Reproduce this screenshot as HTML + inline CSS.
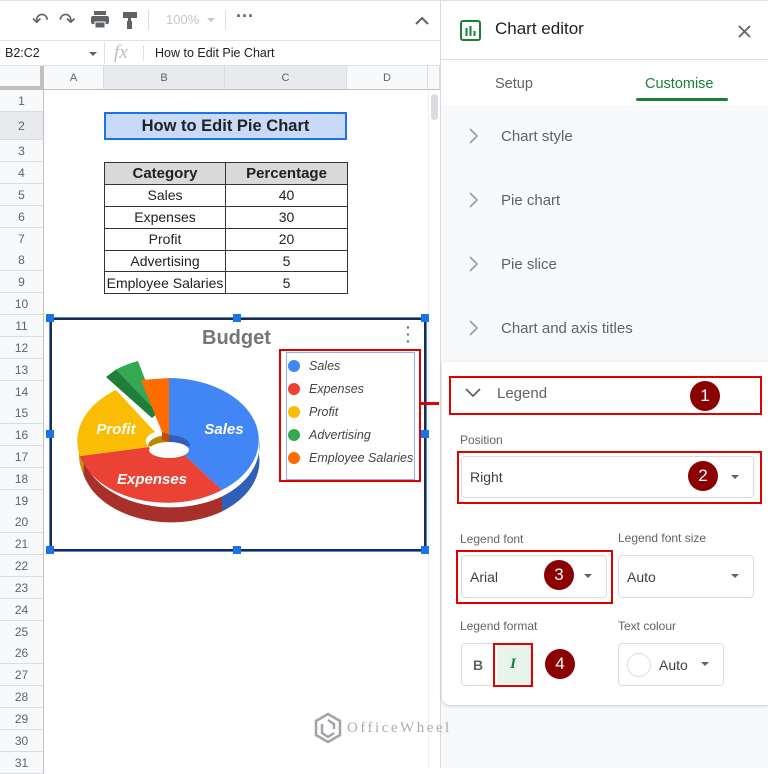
<!DOCTYPE html>
<html><head><meta charset="utf-8"><style>
*{box-sizing:border-box;margin:0;padding:0}
body{width:768px;height:768px;overflow:hidden;background:#fff;font-family:"Liberation Sans",Arial,sans-serif;position:relative;color:#202124}
.a{position:absolute}
.rh{position:absolute;left:0;width:44px;background:#f8f9fa;border-bottom:1px solid #dadce0;border-right:1px solid #c0c0c0;color:#5f6368;font-size:12px;text-align:center;display:flex;align-items:center;justify-content:center}
.ch{position:absolute;top:66px;height:24px;background:#f8f9fa;border-right:1px solid #dadce0;border-bottom:1px solid #c0c0c0;color:#5f6368;font-size:11px;display:flex;align-items:center;justify-content:center}
table{border-collapse:collapse;position:absolute;left:104px;top:162px}
td{border:1px solid #333;font-size:14px;text-align:center;height:21.9px;padding:0}
.item{position:absolute;left:442px;width:326px;height:64px;display:flex;align-items:center;font-size:15px;color:#5f6368}
.item svg{margin:0 23px 0 27px}
.lbl{position:absolute;font-size:12px;color:#5f6368}
.inp{position:absolute;border:1px solid #dadce0;border-radius:4px;background:#fff;font-size:14px;color:#3c4043;display:flex;align-items:center;padding-left:8px}
.tri{position:absolute;width:0;height:0;border-left:4px solid transparent;border-right:4px solid transparent;border-top:4px solid #5f6368}
.num{position:absolute;width:30px;height:30px;border-radius:50%;background:#8b0000;color:#fff;font-size:17px;display:flex;align-items:center;justify-content:center}
.red{position:absolute;border:2.5px solid #e00000}
.h{position:absolute;width:8px;height:8px;background:#1a73e8}
</style></head><body>
<div class="a" style="left:0;top:0;width:440px;height:40px;background:#fff;border-top:1px solid #e0e0e0"></div>
<div class="a" style="left:32px;top:8px;font-size:20px;color:#5f6368;letter-spacing:10px">↶↷</div>
<svg class="a" style="left:90px;top:11px" width="20" height="18" viewBox="0 0 20 18"><rect x="4" y="0" width="12" height="4" fill="#5f6368"/><rect x="1" y="5" width="18" height="8" rx="2" fill="#5f6368"/><rect x="5" y="11" width="10" height="6" fill="#5f6368" stroke="#fff" stroke-width="1"/></svg>
<svg class="a" style="left:122px;top:12px" width="16" height="18" viewBox="0 0 16 18"><rect x="1" y="0" width="14" height="6" fill="#5f6368"/><rect x="6" y="6" width="3" height="3" fill="#5f6368"/><rect x="5" y="9" width="5" height="8" fill="#5f6368"/></svg>
<div class="a" style="left:148px;top:10px;width:1px;height:20px;background:#dadce0"></div>
<div class="a" style="left:166px;top:12px;font-size:13px;color:#c6c6c6">100%</div>
<div class="tri" style="left:207px;top:18px;border-top-color:#c6c6c6"></div>
<div class="a" style="left:225px;top:10px;width:1px;height:20px;background:#dadce0"></div>
<div class="a" style="left:236px;top:6px;font-size:18px;color:#5f6368;font-weight:bold">···</div>
<svg class="a" style="left:415px;top:16px" width="14" height="9"><path d="M1,8 L7,2 L13,8" fill="none" stroke="#5f6368" stroke-width="2"/></svg>
<div class="a" style="left:0;top:40px;width:440px;height:26px;border-top:1px solid #e0e0e0;border-bottom:1px solid #e0e0e0"></div>
<div class="a" style="left:5px;top:46px;font-size:12.5px">B2:C2</div>
<div class="tri" style="left:89px;top:52px"></div>
<div class="a" style="left:104px;top:42px;width:1px;height:22px;background:#e0e0e0"></div>
<div class="a" style="left:114px;top:42px;font-size:19px;color:#bdbdbd;font-style:italic;font-family:'Liberation Serif',serif">fx</div>
<div class="a" style="left:143px;top:45px;width:1px;height:16px;background:#e0e0e0"></div>
<div class="a" style="left:155px;top:46px;font-size:12.5px">How to Edit Pie Chart</div>
<div class="a" style="left:0;top:66px;width:44px;height:24px;background:#f8f9fa;border-right:4px solid #c0c0c0;border-bottom:4px solid #c0c0c0"></div>
<div class="ch" style="left:44px;width:60px">A</div>
<div class="ch" style="left:104px;width:121px;background:#e8eaed">B</div>
<div class="ch" style="left:225px;width:122px;background:#e8eaed">C</div>
<div class="ch" style="left:347px;width:81px">D</div>
<div class="ch" style="left:428px;width:12px"></div>
<div class="a" style="left:428px;top:90px;width:12px;height:678px;background:#fff;border-left:1px solid #eee"></div>
<div class="a" style="left:431px;top:94px;width:7px;height:26px;border-radius:4px;background:#dadce0"></div>
<div class="rh" style="top:90px;height:22px">1</div>
<div class="rh" style="top:112px;height:28px;background:#e8eaed">2</div>
<div class="rh" style="top:140px;height:22px">3</div>
<div class="rh" style="top:162px;height:22px">4</div>
<div class="rh" style="top:184px;height:22px">5</div>
<div class="rh" style="top:206px;height:22px">6</div>
<div class="rh" style="top:228px;height:22px">7</div>
<div class="rh" style="top:249px;height:22px">8</div>
<div class="rh" style="top:271px;height:22px">9</div>
<div class="rh" style="top:293px;height:22px">10</div>
<div class="rh" style="top:315px;height:22px">11</div>
<div class="rh" style="top:337px;height:22px">12</div>
<div class="rh" style="top:359px;height:22px">13</div>
<div class="rh" style="top:381px;height:22px">14</div>
<div class="rh" style="top:402px;height:22px">15</div>
<div class="rh" style="top:424px;height:22px">16</div>
<div class="rh" style="top:446px;height:22px">17</div>
<div class="rh" style="top:468px;height:22px">18</div>
<div class="rh" style="top:490px;height:22px">19</div>
<div class="rh" style="top:511px;height:22px">20</div>
<div class="rh" style="top:533px;height:22px">21</div>
<div class="rh" style="top:555px;height:22px">22</div>
<div class="rh" style="top:577px;height:22px">23</div>
<div class="rh" style="top:599px;height:22px">24</div>
<div class="rh" style="top:621px;height:22px">25</div>
<div class="rh" style="top:642px;height:22px">26</div>
<div class="rh" style="top:664px;height:22px">27</div>
<div class="rh" style="top:686px;height:22px">28</div>
<div class="rh" style="top:708px;height:22px">29</div>
<div class="rh" style="top:730px;height:22px">30</div>
<div class="rh" style="top:752px;height:22px">31</div>
<div class="a" style="left:104px;top:112px;width:243px;height:28px;background:#c9daf8;border:2px solid #1a73e8;font-weight:bold;font-size:16.5px;text-align:center;line-height:24px">How to Edit Pie Chart</div>
<table>
<tr><td style="width:121px;background:#d9d9d9;font-weight:bold;font-size:15px">Category</td><td style="width:122px;background:#d9d9d9;font-weight:bold;font-size:15px">Percentage</td></tr>
<tr><td>Sales</td><td>40</td></tr>
<tr><td>Expenses</td><td>30</td></tr>
<tr><td>Profit</td><td>20</td></tr>
<tr><td>Advertising</td><td>5</td></tr>
<tr><td>Employee Salaries</td><td>5</td></tr>
</table>
<div class="a" style="left:50px;top:318px;width:376px;height:233px;border:2px solid #1f2a44;box-shadow:0 0 0 1px #4a86e8"></div>
<div class="h" style="left:46px;top:314px"></div><div class="h" style="left:233px;top:314px"></div><div class="h" style="left:421px;top:314px"></div>
<div class="h" style="left:46px;top:430px"></div><div class="h" style="left:421px;top:430px"></div>
<div class="h" style="left:46px;top:546px"></div><div class="h" style="left:233px;top:546px"></div><div class="h" style="left:421px;top:546px"></div>
<div class="a" style="left:202px;top:327px;font-size:20px;font-weight:bold;color:#757575">Budget</div>
<div class="a" style="left:406px;top:324px;font-size:14px;color:#666;line-height:7px;font-weight:bold">·<br>·<br>·</div>
<svg class="a" style="left:0;top:0" width="440" height="560">
<path d="M259,440 A90,62 0 0 1 222,496.5 L222,511.5 A90,62 0 0 0 259,455 Z" fill="#2f5fb8"/>
<path d="M222,496.5 A90,62 0 0 1 83.4,459.2 L83.4,474.2 A90,62 0 0 0 222,511.5 Z" fill="#a8302a"/>
<path d="M83.4,459.2 A90,62 0 0 1 79,440 L79,455 A90,62 0 0 0 83.4,474.2 Z" fill="#c99400"/>
<path d="M169,378 A90,62 0 0 1 222,490 L181,452 A21,11 0 0 0 169,437 Z" fill="#4285f4"/>
<path d="M222,490 A90,62 0 0 1 80,456 L149,447 A21,11 0 0 0 181,452 Z" fill="#ea4335"/>
<path d="M80,456 A90,62 0 0 1 116,390 L155,432 A21,11 0 0 0 149,447 Z" fill="#fbbc04"/>
<path d="M148,446 A21,11 0 0 1 169,435 L169,450 Z" fill="#b88a00"/>
<path d="M169,435 A21,11 0 0 1 190,446 L169,450 Z" fill="#2f5fb8"/>
<ellipse cx="169" cy="450" rx="20" ry="8" fill="#fff"/>
<g transform="translate(-18,-20)"><path d="M134,389.5 A90,62 0 0 1 156,381 L176,433 Z" fill="#34a853"/><path d="M124,397 L134,389.5 L176,433 L170,438 Z" fill="#1e7e3a"/></g>
<path d="M169,378 L141,380 L162,432 L169,434 Z" fill="#ff6d01"/>
<path d="M162,432 L169,434 L169,442 L162,440Z" fill="#c44a00"/>
<text x="224" y="434" font-size="15" font-weight="bold" font-style="italic" fill="#fff" text-anchor="middle" font-family="Liberation Sans,sans-serif">Sales</text>
<text x="116" y="434" font-size="15" font-weight="bold" font-style="italic" fill="#fff" text-anchor="middle" font-family="Liberation Sans,sans-serif">Profit</text>
<text x="152" y="484" font-size="15" font-weight="bold" font-style="italic" fill="#fff" text-anchor="middle" font-family="Liberation Sans,sans-serif">Expenses</text>
</svg>
<div class="a" style="left:286px;top:352px;width:129px;height:128px;border:1px solid #8ab4f8"></div>
<div class="red" style="left:279px;top:349px;width:142px;height:133px"></div>
<div class="a" style="left:288px;top:355px;font-size:12.5px;font-style:italic;color:#444;line-height:23px;white-space:nowrap">
<div><span style="display:inline-block;width:12px;height:12px;border-radius:50%;background:#4285f4;vertical-align:-2px;margin-right:9px"></span>Sales</div>
<div><span style="display:inline-block;width:12px;height:12px;border-radius:50%;background:#ea4335;vertical-align:-2px;margin-right:9px"></span>Expenses</div>
<div><span style="display:inline-block;width:12px;height:12px;border-radius:50%;background:#fbbc04;vertical-align:-2px;margin-right:9px"></span>Profit</div>
<div><span style="display:inline-block;width:12px;height:12px;border-radius:50%;background:#34a853;vertical-align:-2px;margin-right:9px"></span>Advertising</div>
<div><span style="display:inline-block;width:12px;height:12px;border-radius:50%;background:#ff6d01;vertical-align:-2px;margin-right:9px"></span>Employee Salaries</div>
</div>
<div class="a" style="left:421px;top:402px;width:18px;height:2.5px;background:#e00000"></div>
<div class="a" style="left:440px;top:0;width:328px;height:768px;background:#f8f9fa;border-left:1px solid #dadce0"></div>
<div class="a" style="left:441px;top:0;width:327px;height:105px;background:#fff;border-top:1px solid #e0e0e0"></div>
<div class="a" style="left:441px;top:59px;width:327px;height:1px;background:#dadce0"></div>
<svg class="a" style="left:460px;top:20px" width="21" height="21" viewBox="0 0 21 21"><rect x="1" y="1" width="19" height="19" rx="2" fill="none" stroke="#188038" stroke-width="2"/><rect x="5.5" y="8" width="2" height="8" fill="#188038"/><rect x="9.5" y="6" width="2" height="10" fill="#188038"/><rect x="13.5" y="11" width="2" height="5" fill="#188038"/></svg>
<div class="a" style="left:495px;top:19px;font-size:17px;color:#202124">Chart editor</div>
<svg class="a" style="left:738px;top:25px" width="13" height="13"><path d="M1,1 L12,12 M12,1 L1,12" stroke="#5f6368" stroke-width="1.8"/></svg>
<div class="a" style="left:495px;top:76px;font-size:14.5px;color:#5f6368">Setup</div>
<div class="a" style="left:645px;top:76px;font-size:14.5px;color:#188038">Customise</div>
<div class="a" style="left:636px;top:98px;width:92px;height:3px;background:#188038;border-radius:2px"></div>
<div class="item" style="top:104px"><svg width="9" height="16"><path d="M1,1 L8,8 L1,15" fill="none" stroke="#9aa0a6" stroke-width="1.8"/></svg>Chart style</div>
<div class="item" style="top:168px"><svg width="9" height="16"><path d="M1,1 L8,8 L1,15" fill="none" stroke="#9aa0a6" stroke-width="1.8"/></svg>Pie chart</div>
<div class="item" style="top:232px"><svg width="9" height="16"><path d="M1,1 L8,8 L1,15" fill="none" stroke="#9aa0a6" stroke-width="1.8"/></svg>Pie slice</div>
<div class="item" style="top:296px"><svg width="9" height="16"><path d="M1,1 L8,8 L1,15" fill="none" stroke="#9aa0a6" stroke-width="1.8"/></svg>Chart and axis titles</div>
<div class="a" style="left:442px;top:362px;width:326px;height:343px;background:#fff;border-radius:0 0 0 8px;box-shadow:0 1px 3px rgba(0,0,0,.2)"></div>
<svg class="a" style="left:465px;top:388px" width="16" height="10"><path d="M1,1 L8,8 L15,1" fill="none" stroke="#5f6368" stroke-width="1.8"/></svg>
<div class="a" style="left:497px;top:385px;font-size:15px;color:#5f6368">Legend</div>
<div class="red" style="left:449px;top:376px;width:313px;height:39px"></div>
<div class="num" style="left:690px;top:381px">1</div>
<div class="lbl" style="left:460px;top:433px">Position</div>
<div class="inp" style="left:461px;top:456px;width:293px;height:42px">Right</div>
<div class="tri" style="left:731px;top:475px"></div>
<div class="red" style="left:457px;top:451px;width:305px;height:53px"></div>
<div class="num" style="left:688px;top:461px">2</div>
<div class="lbl" style="left:460px;top:532px">Legend font</div>
<div class="lbl" style="left:618px;top:531px">Legend font size</div>
<div class="inp" style="left:461px;top:555px;width:146px;height:43px">Arial</div>
<div class="tri" style="left:584px;top:574px"></div>
<div class="red" style="left:456px;top:550px;width:157px;height:54px"></div>
<div class="num" style="left:544px;top:560px">3</div>
<div class="inp" style="left:618px;top:555px;width:136px;height:43px">Auto</div>
<div class="tri" style="left:731px;top:574px"></div>
<div class="lbl" style="left:460px;top:619px">Legend format</div>
<div class="lbl" style="left:618px;top:619px">Text colour</div>
<div class="inp" style="left:461px;top:643px;width:70px;height:43px;padding-left:11px;font-weight:bold;color:#5f6368">B</div>
<div class="a" style="left:497px;top:645px;width:32px;height:39px;background:#e6f4ea;color:#188038;font-weight:bold;font-style:italic;font-size:15px;text-align:center;line-height:39px;font-family:'Liberation Serif',serif">I</div>
<div class="red" style="left:493px;top:643px;width:40px;height:44px"></div>
<div class="num" style="left:545px;top:649px">4</div>
<div class="inp" style="left:618px;top:643px;width:106px;height:43px"><span style="display:inline-block;width:24px;height:24px;border-radius:50%;border:1px solid #dadce0;margin-right:8px"></span>Auto</div>
<div class="tri" style="left:701px;top:662px"></div>
<svg class="a" style="left:313px;top:712px" width="30" height="32" viewBox="0 0 30 32"><path d="M15,2 L27,9 L27,23 L15,30 L3,23 L3,9 Z M9,12 L9,21 L15,25 L21,21 M15,8 L21,12 L21,17" fill="none" stroke="#a0a4a8" stroke-width="2.5"/></svg>
<div class="a" style="left:347px;top:720px;font-size:15px;letter-spacing:2.5px;color:#a8acb0;font-family:'Liberation Serif',serif">OfficeWheel</div>
</body></html>
